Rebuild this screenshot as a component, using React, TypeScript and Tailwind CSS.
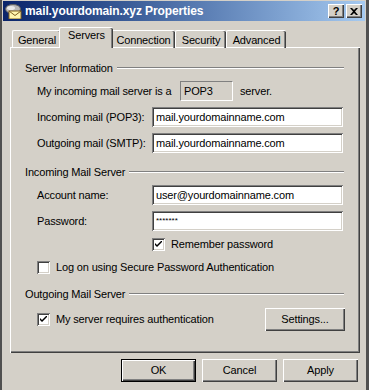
import React from "react";

const raised =
  "shadow-[inset_1px_1px_0_#ffffff,inset_-1px_-1px_0_#404040,inset_-2px_-2px_0_#808080]";
const sunken =
  "shadow-[inset_1px_1px_0_#808080,inset_-1px_-1px_0_#ffffff,inset_2px_2px_0_#404040,inset_-2px_-2px_0_#d4d0c8]";

const GroupHeader = ({ label, mt }: { label: string; mt: string }) => (
  <div className={`flex items-center h-[14px] pl-[14px] pr-[16px] ${mt}`}>
    <span className="pr-[4px]">{label}</span>
    <div className="flex-1 h-[2px] border-t border-t-[#808080] border-b border-b-white" />
  </div>
);

const TextField = ({ value, small }: { value: string; small?: boolean }) => (
  <div
    className={`w-[191px] h-[20px] bg-white ${sunken} flex items-center pl-[4px] ${
      small ? "text-[8px] tracking-[0px]" : ""
    }`}
  >
    {value}
  </div>
);

const Check = ({ checked }: { checked: boolean }) => (
  <div className={`w-[13px] h-[13px] bg-white ${sunken} flex items-center justify-center shrink-0`}>
    {checked && (
      <svg width="7" height="7" viewBox="0 0 7 7">
        <path d="M0 2 L0 4 L2 6 L7 1 L7 -1 L2 4 Z" fill="#000" />
      </svg>
    )}
  </div>
);

const FieldRow = ({ label, value, mt, small }: { label: string; value: string; mt: string; small?: boolean }) => (
  <div className={`flex items-center h-[20px] pl-[26px] ${mt}`}>
    <span className="w-[115px]">{label}</span>
    <TextField value={value} small={small} />
  </div>
);

const Tab = ({ label, active, w }: { label: string; active?: boolean; w: string }) =>
  active ? (
    <div
      className={`relative z-10 -mx-[2px] h-[21px] ${w} bg-[#d4d0c8] border-l border-t border-white rounded-t-[2px] shadow-[inset_-1px_0_0_#404040,inset_-2px_0_0_#808080] flex items-start justify-center pt-[2px]`}
    >
      {label}
    </div>
  ) : (
    <div
      className={`h-[18px] mt-[2px] ${w} border-l border-t border-white rounded-t-[2px] shadow-[inset_-1px_0_0_#404040,inset_-2px_0_0_#808080] flex items-center justify-center pt-[2px]`}
    >
      {label}
    </div>
  );

const Button = ({ label, def, w }: { label: string; def?: boolean; w: string }) => (
  <div className={`${w} h-[23px] ${def ? "border border-black" : ""} flex`}>
    <div className={`flex-1 ${raised} flex items-center justify-center`}>{label}</div>
  </div>
);

const MailIcon = () => (
  <svg width="17" height="16" viewBox="0 0 17 16">
    <ellipse cx="8" cy="6" rx="7.5" ry="4.5" fill="#b8b8b8" stroke="#606060" />
    <ellipse cx="6" cy="5" rx="4" ry="2" fill="#e8e8e8" />
    <rect x="4" y="8" width="12" height="8" fill="#fff7b0" stroke="#806020" />
    <path d="M4 8 L10 12.5 L16 8" fill="none" stroke="#806020" />
  </svg>
);

export default function App() {
  return (
    <div className="w-[369px] h-[390px] bg-[#d4d0c8] border-l-2 border-l-[#505050] border-r-[3px] border-r-[#505050] text-[11px] tracking-[-0.15px] text-black font-['Liberation_Sans',Arial,sans-serif] leading-none overflow-hidden select-none">
      <div className="h-[20px] mt-[1px] mx-[1px] bg-gradient-to-r from-[#0a246a] to-[#a6caf0] flex items-center pl-[2px] pr-[3px]">
        <MailIcon />
        <span className="ml-[3px] text-white font-bold text-[12px] tracking-[-0.1px]">mail.yourdomain.xyz Properties</span>
        <div className="flex-1" />
        <div className={`w-[16px] h-[14px] bg-[#d4d0c8] ${raised} flex items-center justify-center font-bold text-[11px]`}>?</div>
        <div className={`ml-[2px] w-[16px] h-[14px] bg-[#d4d0c8] ${raised} flex items-center justify-center`}>
          <svg width="8" height="7" viewBox="0 0 8 7">
            <path d="M0 0 L2 0 L4 2 L6 0 L8 0 L5 3.5 L8 7 L6 7 L4 5 L2 7 L0 7 L3 3.5 Z" fill="#000" />
          </svg>
        </div>
      </div>

      <div className="flex items-end h-[28px] pl-[10px] mt-[-1px]">
        <Tab label="General" w="w-[49px]" />
        <Tab label="Servers" active w="w-[54px]" />
        <Tab label="Connection" w="w-[64px]" />
        <Tab label="Security" w="w-[51px]" />
        <Tab label="Advanced" w="w-[60px]" />
      </div>

      <div className="ml-[8px] w-[350px] h-[306px] -mt-[1px] border-l border-t border-white shadow-[inset_-1px_-1px_0_#404040,inset_-2px_-2px_0_#808080] flex flex-col">
        <GroupHeader label="Server Information" mt="mt-[13px]" />
        <div className="flex items-center h-[20px] pl-[26px] mt-[6px]">
          <span className="w-[143px]">My incoming mail server is a</span>
          <div className="w-[53px] h-[20px] border-t border-l border-t-[#808080] border-l-[#808080] border-b border-r border-b-white border-r-white flex items-center pl-[3px]">
            POP3
          </div>
          <span className="ml-[7px]">server.</span>
        </div>
        <FieldRow label="Incoming mail (POP3):" value="mail.yourdomainname.com" mt="mt-[6px]" />
        <FieldRow label="Outgoing mail (SMTP):" value="mail.yourdomainname.com" mt="mt-[6px]" />

        <GroupHeader label="Incoming Mail Server" mt="mt-[12px]" />
        <FieldRow label="Account name:" value="user@yourdomainname.com" mt="mt-[6px]" />
        <FieldRow label="Password:" value="*******" mt="mt-[6px]" small />
        <div className="flex items-center h-[13px] pl-[141px] mt-[7px]">
          <Check checked />
          <span className="ml-[6px]">Remember password</span>
        </div>
        <div className="flex items-center h-[13px] pl-[26px] mt-[10px]">
          <Check checked={false} />
          <span className="ml-[6px]">Log on using Secure Password Authentication</span>
        </div>

        <GroupHeader label="Outgoing Mail Server" mt="mt-[13px]" />
        <div className="flex items-center h-[23px] pl-[26px] pr-[15px] mt-[7px]">
          <Check checked />
          <span className="ml-[6px]">My server requires authentication</span>
          <div className="flex-1" />
          <Button label="Settings..." w="w-[80px]" />
        </div>
      </div>

      <div className="flex justify-end gap-[6px] pr-[8px] mt-[6px]">
        <Button label="OK" def w="w-[75px]" />
        <Button label="Cancel" w="w-[75px]" />
        <Button label="Apply" w="w-[75px]" />
      </div>
    </div>
  );
}
